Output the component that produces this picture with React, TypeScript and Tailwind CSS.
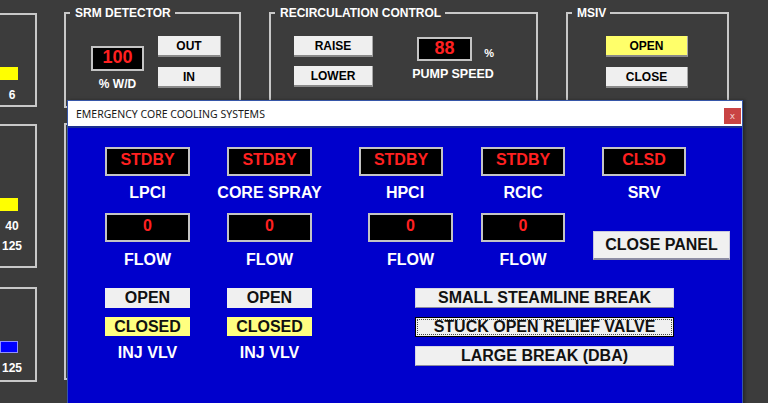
import React from 'react';

const Display = ({ value, className }: { value: string; className: string }) => (
  <div
    className={`flex items-center justify-center bg-black border-2 border-[#c4c4c4] text-[#ff2020] font-bold leading-none pb-[3px] ${className}`}
  >
    {value}
  </div>
);

const PanelButton = ({ label, yellow }: { label: string; yellow?: boolean }) => (
  <button
    className={`block h-[21px] w-full text-[12px] font-bold text-black leading-none border-b-2 border-r border-b-[#8a8a8a] border-r-[#a6a6a6] ${
      yellow ? 'bg-[#ffff6a]' : 'bg-[#efefef]'
    }`}
  >
    {label}
  </button>
);

const Group = ({
  title,
  className,
  children,
}: {
  title: string;
  className: string;
  children?: React.ReactNode;
}) => (
  <fieldset className={`border-2 border-[#c8c8c8] ${className}`}>
    <legend className="ml-[4px] pl-[5px] pr-[4px] text-[12px] leading-[14px] font-bold text-white">
      {title}
    </legend>
    {children}
  </fieldset>
);

const Label = ({ text, className = '' }: { text: string; className?: string }) => (
  <span className={`whitespace-nowrap text-[16px] leading-[18px] font-bold text-white ${className}`}>
    {text}
  </span>
);

const SystemColumn = ({ name }: { name: string }) => (
  <div className="flex flex-col items-center w-[85px]">
    <Display value="STDBY" className="w-[85px] h-[29px] text-[16px]" />
    <Label text={name} className="mt-[8px]" />
    <Display value="0" className="mt-[11px] w-[85px] h-[29px] text-[16px]" />
    <Label text="FLOW" className="mt-[9px]" />
  </div>
);

const ValveColumn = () => (
  <div className="flex flex-col items-center w-[85px]">
    <button className="block h-[20px] w-full bg-[#f0f0f0] text-[16px] leading-none font-bold text-[#111]">OPEN</button>
    <button className="block mt-[9px] h-[19px] w-full bg-[#ffff80] text-[16px] leading-none font-bold text-[#111]">CLOSED</button>
    <Label text="INJ VLV" className="mt-[8px]" />
  </div>
);

const BreakButton = ({ label, focused, className = '' }: { label: string; focused?: boolean; className?: string }) => (
  <button
    className={`block h-[20px] w-full bg-[#f0f0f0] text-[16px] leading-none font-bold text-[#111] border ${
      focused
        ? 'border-black outline-1 outline-dotted outline-[#444] outline-offset-[-3px]'
        : 'border-[#d4d4e4] border-b-[#8c8ca0]'
    } ${className}`}
  >
    {label}
  </button>
);

export default function App() {
  return (
    <div className="relative w-[768px] h-[403px] overflow-hidden bg-[#3c3c3c] font-['Liberation_Sans',Arial,sans-serif]">
      {/* control room panel behind the dialog */}
      <div className="flex items-start pt-[6px]">
        <div className="-ml-[4px] mt-[7px] flex flex-col w-[41px]">
          <div className="h-[94px] border-2 border-[#c8c8c8] flex flex-col">
            <div className="ml-[2px] mt-[52px] w-[18px] h-[13px] bg-[#ffff00]" />
            <span className="ml-[2px] mt-[8px] w-[24px] text-center text-[12px] leading-[14px] font-bold text-white">6</span>
          </div>
          <div className="mt-[17px] h-[144px] border-2 border-[#c8c8c8] flex flex-col">
            <div className="ml-[2px] mt-[72px] w-[18px] h-[13px] bg-[#ffff00]" />
            <span className="ml-[2px] mt-[8px] w-[24px] text-center text-[12px] leading-[14px] font-bold text-white">40</span>
            <span className="ml-[2px] mt-[6px] w-[24px] text-center text-[12px] leading-[14px] font-bold text-white">125</span>
          </div>
          <div className="mt-[19px] h-[95px] border-2 border-[#c8c8c8] flex flex-col">
            <div className="ml-[2px] mt-[52px] w-[18px] h-[12px] bg-[#0000ff] border border-[#9090ff]" />
            <span className="ml-[2px] mt-[8px] w-[24px] text-center text-[12px] leading-[14px] font-bold text-white">125</span>
          </div>
        </div>

        <div className="ml-[27px] flex flex-col w-[177px]">
          <Group title="SRM DETECTOR" className="w-[177px] h-[102px]">
            <div className="flex items-start pl-[25px] pt-[16px]">
              <div className="mt-[10px] flex flex-col items-center w-[53px]">
                <Display value="100" className="w-[53px] h-[25px] text-[18px]" />
                <span className="mt-[6px] whitespace-nowrap text-[12px] leading-[14px] font-bold text-white">% W/D</span>
              </div>
              <div className="ml-[14px] w-[63px] flex flex-col gap-[10px]">
                <PanelButton label="OUT" />
                <PanelButton label="IN" />
              </div>
            </div>
          </Group>
          <div className="mt-[15px] h-[257px] border-2 border-[#c8c8c8]" />
        </div>

        <Group title="RECIRCULATION CONTROL" className="ml-[28px] w-[269px] h-[102px]">
          <div className="flex items-start pl-[23px] pt-[16px]">
            <div className="w-[79px] flex flex-col gap-[9px]">
              <PanelButton label="RAISE" />
              <PanelButton label="LOWER" />
            </div>
            <div className="ml-[39px] mt-[1px] w-[82px] flex flex-col">
              <div className="flex items-start">
                <Display value="88" className="ml-[5px] w-[60px] h-[24px] text-[18px]" />
                <span className="ml-[12px] mt-[10px] text-[11px] leading-[12px] font-bold text-white">%</span>
              </div>
              <span className="mt-[6px] whitespace-nowrap text-center text-[12.5px] leading-[14px] font-bold text-white">
                PUMP SPEED
              </span>
            </div>
          </div>
        </Group>

        <Group title="MSIV" className="ml-[28px] w-[163px] h-[102px]">
          <div className="pl-[38px] pt-[16px] w-[120px] flex flex-col gap-[10px]">
            <PanelButton label="OPEN" yellow />
            <PanelButton label="CLOSE" />
          </div>
        </Group>
      </div>

      {/* ECCS dialog */}
      <div className="absolute left-[67px] top-[100px] w-[676px] h-[320px] border border-[#3656a8] shadow-[2px_0_3px_rgba(0,0,0,0.35)] flex flex-col">
        <div className="h-[27px] bg-white border-b-2 border-[#1b2f8f] flex items-start justify-between">
          <span className="pl-[8px] pt-[7px] font-['Noto_Sans',sans-serif] text-[10.5px] leading-[13px] text-[#1a1a1a]">
            EMERGENCY CORE COOLING SYSTEMS
          </span>
          <div className="mt-[7px] mr-[1px] w-[17px] h-[16px] bg-[#c94343] flex items-center justify-center text-[9px] leading-none text-[#f4d0d0] font-['DejaVu_Sans',sans-serif]">
            x
          </div>
        </div>

        <div className="flex-1 bg-[#0000cc] flex flex-col">
          <div className="flex items-start pt-[19px] pl-[37px]">
            <SystemColumn name="LPCI" />
            <div className="ml-[37px]">
              <SystemColumn name="CORE SPRAY" />
            </div>
            <div className="ml-[47px] w-[94px] flex flex-col items-start">
              <Display value="STDBY" className="w-[84px] h-[29px] text-[16px]" />
              <Label text="HPCI" className="mt-[8px] ml-[4px] w-[84px] text-center" />
              <Display value="0" className="mt-[11px] ml-[9px] w-[85px] h-[29px] text-[16px]" />
              <Label text="FLOW" className="mt-[9px] ml-[9px] w-[85px] text-center" />
            </div>
            <div className="ml-[28px] flex flex-col items-center w-[84px]">
              <Display value="STDBY" className="w-[84px] h-[29px] text-[16px]" />
              <Label text="RCIC" className="mt-[8px]" />
              <Display value="0" className="mt-[11px] w-[84px] h-[29px] text-[16px]" />
              <Label text="FLOW" className="mt-[9px]" />
            </div>
            <div className="ml-[28px] w-[137px] flex flex-col items-start">
              <Display value="CLSD" className="ml-[9px] w-[84px] h-[29px] text-[16px]" />
              <Label text="SRV" className="mt-[8px] ml-[9px] w-[84px] text-center" />
              <button className="block mt-[29px] w-[137px] h-[29px] bg-[#f0f0f0] border border-[#c8c8dc] border-b-2 border-b-[#8c8ca4] text-[16px] leading-none font-bold text-[#111]">
                CLOSE PANEL
              </button>
            </div>
          </div>

          <div className="mt-[19px] flex items-start pl-[37px]">
            <ValveColumn />
            <div className="ml-[37px]">
              <ValveColumn />
            </div>
            <div className="ml-[103px] w-[259px] flex flex-col">
              <BreakButton label="SMALL STEAMLINE BREAK" />
              <BreakButton label="STUCK OPEN RELIEF VALVE" focused className="mt-[9px] h-[18px]" />
              <BreakButton label="LARGE BREAK (DBA)" className="mt-[9px]" />
            </div>
          </div>
        </div>
      </div>
    </div>
  );
}
